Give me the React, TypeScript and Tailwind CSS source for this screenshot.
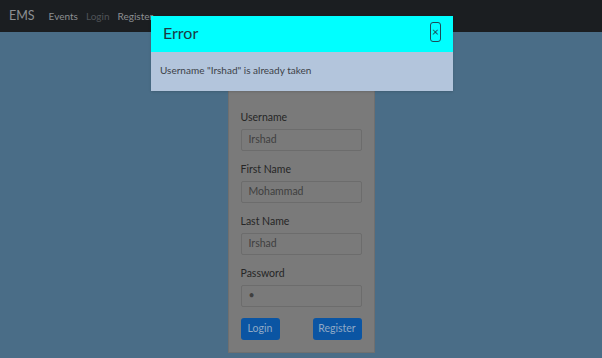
import React from "react";

const font = { fontFamily: '"Lato", "Open Sans", sans-serif' };

const Field: React.FC<{ label: string; value: string }> = ({ label, value }) => (
  <div className="flex flex-col">
    <label className="text-[10.5px] leading-[14px] text-[#262626] mb-[5px]">{label}</label>
    <div className="h-[22px] border border-[#6c6c6c] rounded-[2px] bg-[#7a7a7a] px-[7px] flex items-center text-[10.5px] text-[#3f3f3f]">
      {value}
    </div>
  </div>
);

export default function App() {
  return (
    <div className="relative h-[358px] w-[602px] overflow-hidden bg-[#4a6d87]" style={font}>
      <nav className="h-[32px] bg-[#1b1e21] flex items-center pl-[9px]">
        <span className="text-[12.5px] text-[#8c8f92] mr-[14px]">EMS</span>
        <div className="flex gap-[8px] text-[10px]">
          <span className="text-[#8c8f92]">Events</span>
          <span className="text-[#4f5357]">Login</span>
          <span className="text-[#8c8f92]">Register</span>
        </div>
      </nav>

      <div className="flex justify-center pt-[52px]">
        <div className="w-[147px] bg-[#7a7a7a] border border-[#6f6f6f] pl-[12px] pr-[12px] pt-[25px] pb-[12px] flex flex-col gap-[11px]">
          <Field label="Username" value="Irshad" />
          <Field label="First Name" value="Mohammad" />
          <Field label="Last Name" value="Irshad" />
          <Field label="Password" value="•" />
          <div className="flex justify-between">
            <button className="h-[22px] w-[39px] rounded-[3px] bg-[#0b55a3] text-[10.5px] text-[#8fa9c6]">Login</button>
            <button className="h-[22px] w-[49px] rounded-[3px] bg-[#0b55a3] text-[10.5px] text-[#8fa9c6]">Register</button>
          </div>
        </div>
      </div>

      <div className="absolute left-[151px] top-[16px] w-[302px] shadow-sm">
        <div className="h-[36px] bg-[#00ffff] flex items-center justify-between pl-[12px] pr-[12px]">
          <span className="text-[16px] text-[#1b3a45] -mt-[2px]">Error</span>
          <button className="w-[11px] h-[20px] -mt-[4px] border border-[#1c4a58] rounded-[3px] flex items-center justify-center text-[12px] leading-none text-[#1c4a58]">
            ×
          </button>
        </div>
        <div className="h-[39px] bg-[#b3c5dc] flex items-center pl-[9px] pb-[3px] text-[10px] text-[#3c4148]">
          Username "Irshad" is already taken
        </div>
      </div>
    </div>
  );
}
